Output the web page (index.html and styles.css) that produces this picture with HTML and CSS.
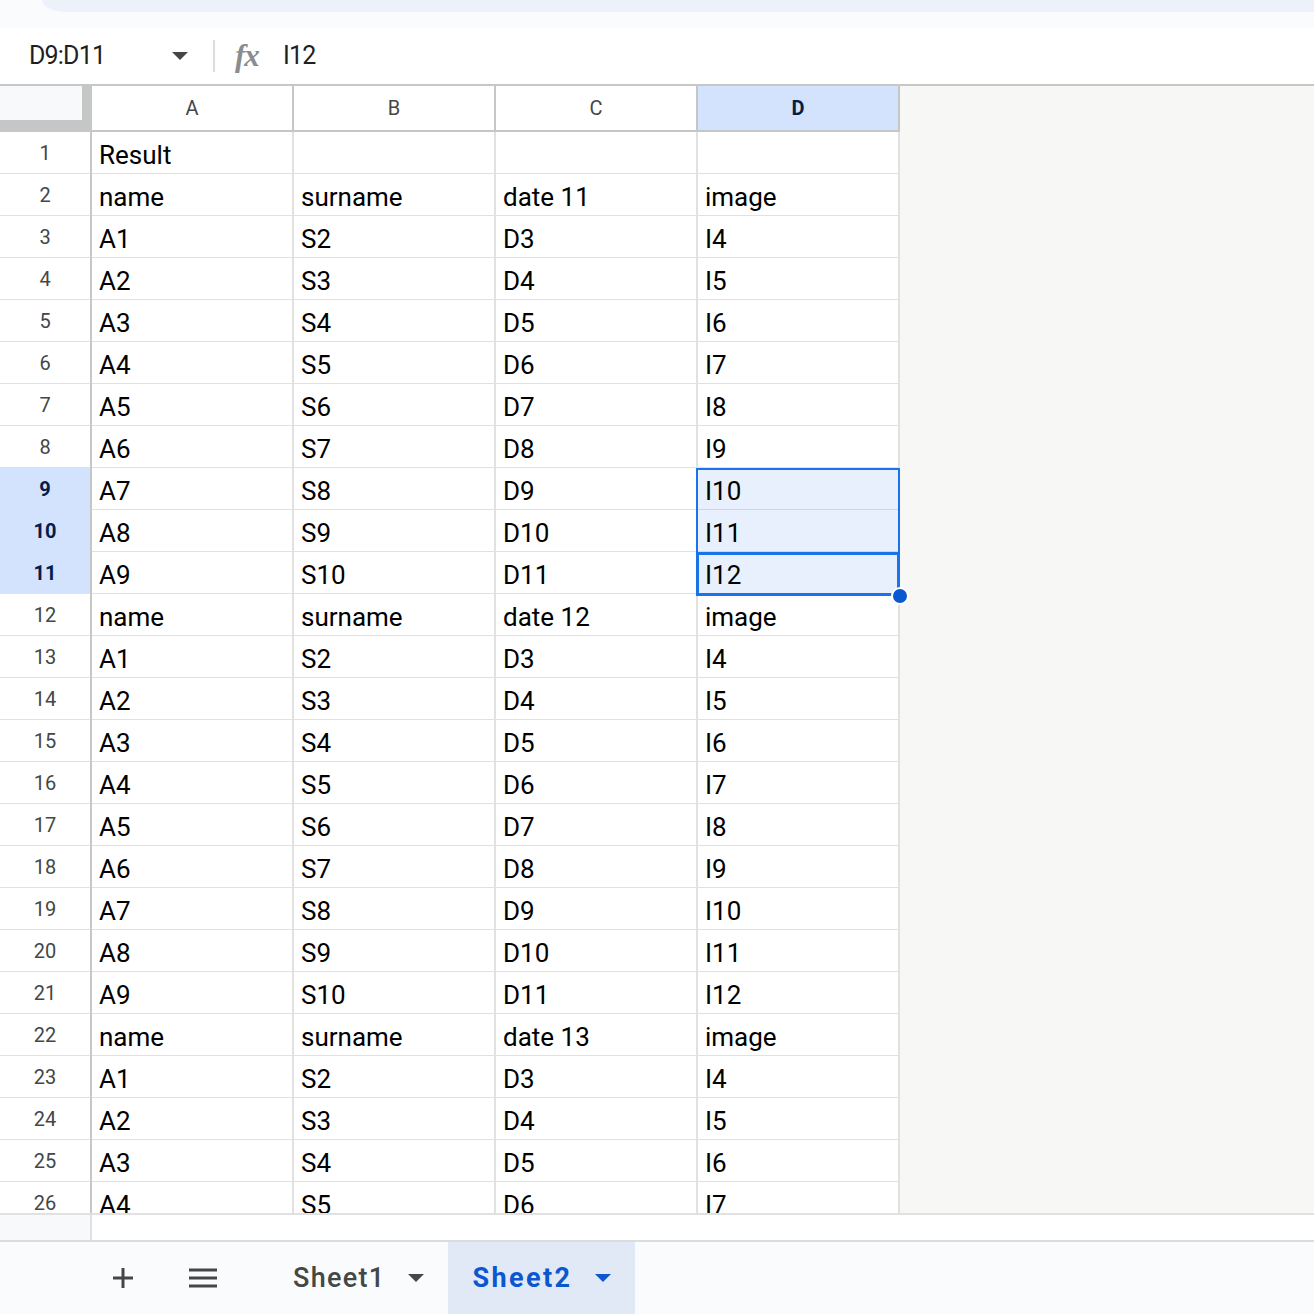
FILE: index.html
```html
<!DOCTYPE html>
<html>
<head>
<meta charset="utf-8">
<link rel="stylesheet" href="styles.css">
</head>
<body>
<div class="topstrip"><div class="pill"></div></div>
<div class="fbar">
  <div class="namebox">D9:D11</div>
  <svg class="caret" width="16" height="8" viewBox="0 0 16 8"><polygon points="0,0 16,0 8,8" fill="#444746"/></svg>
  <div class="sep"></div>
  <div class="fx">f<span class="fxx">x</span></div>
  <div class="ftext">I12</div>
</div>
<div class="sheet">
  <div class="row head"><div class="corner"><div class="corner-in"></div></div><div class="ch">A</div><div class="ch">B</div><div class="ch">C</div><div class="ch on">D</div></div>
  <div class="row"><div class="rh">1</div><div class="c">Result</div><div class="c"></div><div class="c"></div><div class="c"></div></div>
  <div class="row"><div class="rh">2</div><div class="c">name</div><div class="c">surname</div><div class="c">date 11</div><div class="c">image</div></div>
  <div class="row"><div class="rh">3</div><div class="c">A1</div><div class="c">S2</div><div class="c">D3</div><div class="c">I4</div></div>
  <div class="row"><div class="rh">4</div><div class="c">A2</div><div class="c">S3</div><div class="c">D4</div><div class="c">I5</div></div>
  <div class="row"><div class="rh">5</div><div class="c">A3</div><div class="c">S4</div><div class="c">D5</div><div class="c">I6</div></div>
  <div class="row"><div class="rh">6</div><div class="c">A4</div><div class="c">S5</div><div class="c">D6</div><div class="c">I7</div></div>
  <div class="row"><div class="rh">7</div><div class="c">A5</div><div class="c">S6</div><div class="c">D7</div><div class="c">I8</div></div>
  <div class="row"><div class="rh">8</div><div class="c">A6</div><div class="c">S7</div><div class="c">D8</div><div class="c">I9</div></div>
  <div class="row"><div class="rh on">9</div><div class="c">A7</div><div class="c">S8</div><div class="c">D9</div><div class="c hl">I10</div></div>
  <div class="row"><div class="rh on">10</div><div class="c">A8</div><div class="c">S9</div><div class="c">D10</div><div class="c hl">I11</div></div>
  <div class="row"><div class="rh on">11</div><div class="c">A9</div><div class="c">S10</div><div class="c">D11</div><div class="c hl">I12</div></div>
  <div class="row"><div class="rh">12</div><div class="c">name</div><div class="c">surname</div><div class="c">date 12</div><div class="c">image</div></div>
  <div class="row"><div class="rh">13</div><div class="c">A1</div><div class="c">S2</div><div class="c">D3</div><div class="c">I4</div></div>
  <div class="row"><div class="rh">14</div><div class="c">A2</div><div class="c">S3</div><div class="c">D4</div><div class="c">I5</div></div>
  <div class="row"><div class="rh">15</div><div class="c">A3</div><div class="c">S4</div><div class="c">D5</div><div class="c">I6</div></div>
  <div class="row"><div class="rh">16</div><div class="c">A4</div><div class="c">S5</div><div class="c">D6</div><div class="c">I7</div></div>
  <div class="row"><div class="rh">17</div><div class="c">A5</div><div class="c">S6</div><div class="c">D7</div><div class="c">I8</div></div>
  <div class="row"><div class="rh">18</div><div class="c">A6</div><div class="c">S7</div><div class="c">D8</div><div class="c">I9</div></div>
  <div class="row"><div class="rh">19</div><div class="c">A7</div><div class="c">S8</div><div class="c">D9</div><div class="c">I10</div></div>
  <div class="row"><div class="rh">20</div><div class="c">A8</div><div class="c">S9</div><div class="c">D10</div><div class="c">I11</div></div>
  <div class="row"><div class="rh">21</div><div class="c">A9</div><div class="c">S10</div><div class="c">D11</div><div class="c">I12</div></div>
  <div class="row"><div class="rh">22</div><div class="c">name</div><div class="c">surname</div><div class="c">date 13</div><div class="c">image</div></div>
  <div class="row"><div class="rh">23</div><div class="c">A1</div><div class="c">S2</div><div class="c">D3</div><div class="c">I4</div></div>
  <div class="row"><div class="rh">24</div><div class="c">A2</div><div class="c">S3</div><div class="c">D4</div><div class="c">I5</div></div>
  <div class="row"><div class="rh">25</div><div class="c">A3</div><div class="c">S4</div><div class="c">D5</div><div class="c">I6</div></div>
  <div class="row"><div class="rh">26</div><div class="c">A4</div><div class="c">S5</div><div class="c">D6</div><div class="c">I7</div></div>
  <div class="sel-range"></div>
  <div class="sel-active"></div>
  <div class="sel-handle"></div>
</div>
<div class="hscroll"><div class="hs-left"></div><div class="hs-rest"></div></div>
<div class="tabbar">
  <svg class="plus" width="20" height="20" viewBox="0 0 20 20"><path d="M10 0V20M0 10H20" stroke="#444746" stroke-width="3"/></svg>
  <svg class="menu" width="28" height="20" viewBox="0 0 28 20"><path d="M0 2H28M0 10H28M0 18H28" stroke="#444746" stroke-width="3"/></svg>
  <div class="tab">
    <span class="tab-name">Sheet1</span>
    <svg width="16" height="8" viewBox="0 0 16 8"><polygon points="0,0 16,0 8,8" fill="#444746"/></svg>
  </div>
  <div class="tab active">
    <span class="tab-name">Sheet2</span>
    <svg width="16" height="8" viewBox="0 0 16 8"><polygon points="0,0 16,0 8,8" fill="#0b57d0"/></svg>
  </div>
</div>
</body>
</html>
```
FILE: styles.css
```css
* { box-sizing: border-box; }
html, body {
  margin: 0;
  padding: 0;
  width: 1314px;
  height: 1314px;
  overflow: hidden;
  background: #ffffff;
  font-family: Roboto, "Liberation Sans", sans-serif;
}
.topstrip {
  height: 28px;
  background: #f9fbfd;
}
.pill {
  height: 12px;
  margin-left: 42px;
  background: #edf2fa;
  border-bottom-left-radius: 24px 12px;
}
.fbar {
  height: 58px;
  border-bottom: 2px solid #c7c7c7;
  display: flex;
  align-items: center;
  padding-left: 29px;
  background: #ffffff;
}
.namebox {
  width: 143px;
  font-size: 25px;
  letter-spacing: -0.8px;
  color: #1f1f1f;
  margin-top: -2px;
}
.caret { flex: none; }
.sep {
  width: 2px;
  height: 32px;
  background: #dadce0;
  margin-left: 25px;
}
.fx {
  margin-left: 20px;
  width: 30px;
  font-family: "Liberation Serif", "DejaVu Serif", serif;
  font-style: italic;
  font-weight: 700;
  font-size: 31px;
  color: #8a8d90;
  letter-spacing: -1px;
  line-height: 30px;
}
.fxx { font-weight: 700; }
.ftext {
  margin-left: 18px;
  font-size: 25px;
  letter-spacing: -0.8px;
  color: #1f1f1f;
  margin-top: -2px;
}
.sheet {
  position: relative;
  height: 1127px;
  overflow: hidden;
  background: #f7f8f6;
}
.row {
  display: grid;
  grid-template-columns: 92px 202px 202px 202px 202px;
  width: 900px;
  height: 42px;
}
.row.head { height: 46px; }
.corner {
  background: #c4c7c5;
  position: relative;
}
.corner-in {
  width: 82px;
  height: 34px;
  background: #f8f9fa;
}
.ch {
  background: #ffffff;
  border-right: 2px solid #c4c7c5;
  border-bottom: 2px solid #c4c7c5;
  text-align: center;
  font-size: 20px;
  line-height: 44px;
  color: #444746;
}
.ch.on {
  background: #d3e3fd;
  color: #041e49;
  font-weight: 700;
}
.rh {
  background: #ffffff;
  border-right: 2px solid #c4c7c5;
  border-bottom: 2px solid #e1e1e1;
  text-align: center;
  font-size: 20px;
  line-height: 40px;
  padding-top: 1px;
  color: #444746;
}
.rh.on {
  background: #d3e3fd;
  color: #041e49;
  font-weight: 700;
}
.c {
  background: #ffffff;
  border-right: 2px solid #e1e1e1;
  border-bottom: 2px solid #e1e1e1;
  padding: 4px 0 0 7px;
  font-size: 26px;
  line-height: 39px;
  color: #000000;
  white-space: nowrap;
  overflow: hidden;
}
.c.hl { background: #e8f0fe; border-bottom-color: #cdd6e4; }
.sel-range {
  position: absolute;
  left: 696px;
  top: 382px;
  width: 204px;
  height: 128px;
  border: 2px solid #1a73e8;
}
.sel-active {
  position: absolute;
  left: 696px;
  top: 466px;
  width: 204px;
  height: 44px;
  border: 3px solid #1a73e8;
}
.sel-handle {
  position: absolute;
  left: 891px;
  top: 501px;
  width: 18px;
  height: 18px;
  border-radius: 50%;
  background: #0b57d0;
  border: 2px solid #ffffff;
}
.hscroll {
  display: flex;
  height: 29px;
  border-top: 2px solid #e1e1e1;
  border-bottom: 2px solid #dadce0;
}
.hs-left {
  width: 92px;
  background: #f8f9fa;
  border-right: 2px solid #e1e1e1;
}
.hs-rest { flex: 1; background: #ffffff; }
.tabbar {
  height: 72px;
  background: #f9fbfd;
  display: flex;
  align-items: center;
  padding-left: 113px;
}
.plus { flex: none; }
.menu { flex: none; margin-left: 56px; }
.tab {
  height: 72px;
  display: flex;
  align-items: center;
  gap: 23px;
  padding: 0 24px;
}
.tab:first-of-type { margin-left: 52px; }
.tab-name {
  font-size: 27px;
  font-weight: 500;
  letter-spacing: 1.3px;
  color: #444746;
}
.tab.active { background: #e1e9f7; }
.tab.active .tab-name {
  font-weight: 700;
  color: #0b57d0;
  letter-spacing: 2.4px;
}
```
